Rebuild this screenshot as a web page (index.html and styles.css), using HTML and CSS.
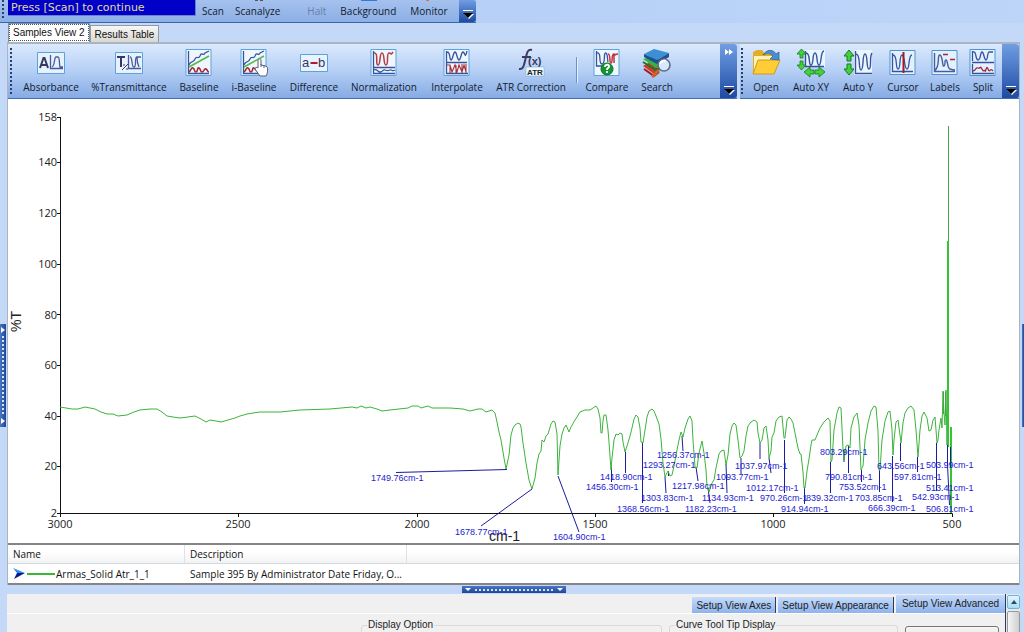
FILE: index.html
```html
<!DOCTYPE html>
<html lang="en">
<head>
<meta charset="utf-8">
<title>Spectrum - Samples View</title>
<link rel="stylesheet" href="styles.css">
</head>
<body>
<header class="command-bar">
  <div class="commands">
    <span class="grip"></span>
    <p class="status" role="status">Press [Scan] to continue</p>
    <button class="command command-scan">Scan</button>
    <button class="command"><svg class="command-icon" viewBox="0 0 20 2"><path d="M7 0h3v1h-3zM12 0h3v1h-3z" fill="#555"/></svg>Scanalyze</button>
    <button class="command command-halt" disabled>Halt</button>
    <button class="command command-background"><svg class="command-icon" viewBox="0 0 20 2"><path d="M3 0h16v1h-16z" fill="#2d7dd8"/></svg>Background</button>
    <button class="command command-monitor"><svg class="command-icon" viewBox="0 0 20 2"><path d="M7 0h3v1h-3z" fill="#d8743c"/></svg>Monitor</button>
    <button class="overflow" aria-label="More commands"><svg class="overflow-arrow" viewBox="0 0 14 11"><path d="M2 1.500h10" stroke="#fff"/><path d="M3 5h10l-5 5z" fill="#fff"/><path d="M2 4h10l-5 5z" fill="#000"/></svg></button>
  </div>
</header>

<div class="workspace">
  <aside class="rail">
    <button class="splitter-v" aria-label="Expand left pane"><span class="arrow-right"></span><span class="dots-v"></span><span class="arrow-right"></span></button>
  </aside>

  <main class="content">
    <nav class="view-tabs">
      <button class="view-tab view-tab-active">Samples View 2</button>
      <button class="view-tab">Results Table</button>
    </nav>

    <section class="view">
      <div class="toolbars">
        <div class="toolbar toolbar-math">
          <span class="grip"></span>
          <button class="tool w-78"><svg class="icon" viewBox="0 0 28 28"><path d="M.5 3.500h27v21h-27z" fill="#e8f2fd" stroke="#5ba3dd"/><path d="M3 19l3.500-10h1l3.500 10M4.500 16h5" fill="none" stroke="#373765" stroke-width="2"/><path d="M13.500 6v13.500H26M15 18c3-1 2-10 4-10h2c2 0 1 8 2 10h3" fill="none" stroke="#465a9b" stroke-width="1.300"/></svg>Absorbance</button>
          <button class="tool w-78"><svg class="icon" viewBox="0 0 28 28"><path d="M.5 3.500h27v21h-27z" fill="#e8f2fd" stroke="#5ba3dd"/><path d="M2 8h8M6 8v10" stroke="#373765" stroke-width="2"/><path d="M7 21l6-6M8 16h2M11 20h2" stroke="#373765"/><path d="M13.500 6v13.500H26M15 8c3 0 1 10 4 10s0-10 3-10h4M22 8c0 4 1 8 2 10" fill="none" stroke="#465a9b" stroke-width="1.300"/></svg>%Transmittance</button>
          <button class="tool w-62"><svg class="icon" viewBox="0 0 28 28"><path d="M1 .5h25v26H1z" fill="#eff6fe" stroke="#5ba3dd"/><path d="M3.500 2v22.500H24M4 16c3-6 4-1 6-6 2-4 3 1 5-3 2-5 3 1 5-3l4-2" fill="none" stroke="#36549e" stroke-width="1.300"/><path d="M4 18L24 7" stroke="#4dbb44" stroke-width="1.500"/><path d="M4 23c2-1 2-5 4-4s1 4 3 4 1-5 3-4 1 4 3 4 2-4 4-3 1 3 3 3" fill="none" stroke="#a5252c" stroke-width="1.500"/></svg>Baseline</button>
          <button class="tool w-48"><svg class="icon" viewBox="0 0 28 28"><path d="M1 .5h25v26H1z" fill="#eff6fe" stroke="#5ba3dd"/><path d="M3.500 2v22.500H24M4 16c3-6 4-1 6-6 2-4 3 1 5-3 2-5 3 1 5-3l4-2" fill="none" stroke="#36549e" stroke-width="1.300"/><path d="M4 18L24 7" stroke="#4dbb44" stroke-width="1.500"/><path d="M4 23c2-1 2-5 4-4s1 4 3 4 1-5 3-4l3 3" fill="none" stroke="#a5252c" stroke-width="1.500"/><path d="M18 18v-7c1-2 3-1 3 0v5l5 1c2 1 2 4 1 8l-1 2h-6l-5-7c0-2 2-2 3-1z" fill="#fff" stroke="#5a6078"/><path d="M21 15v3M24 16v3" stroke="#5a6078"/></svg>i-Baseline</button>
          <button class="tool w-72"><svg class="icon" viewBox="0 0 28 28"><path d="M.5 5.500h27v17h-27z" fill="#eaf3fd" stroke="#5ba3dd"/><text x="2" y="18" class="icon-letter">a</text><text x="18" y="18" class="icon-letter">b</text><path d="M10.500 14h7" stroke="#a32329" stroke-width="2"/></svg>Difference</button>
          <button class="tool w-68"><svg class="icon" viewBox="0 0 28 28"><path d="M1 .5h25v26H1z" fill="#eff6fe" stroke="#5ba3dd"/><path d="M3.500 2v22.500H25M3 18.500h22M4 21c3-2 3 2 6 2s3-3 5-2 3 1 5 0 2 2 5 0" fill="none" stroke="#36549e" stroke-width="1.300"/><path d="M4 4c5-1 1 12 4 12s1-12 4-12 1 12 4 12 0-12 3-12 1 3 4-1" fill="none" stroke="#b43b41" stroke-width="1.500"/></svg>Normalization</button>
          <button class="tool w-78"><svg class="icon" viewBox="0 0 28 28"><path d="M1 .5h25v26H1z" fill="#eff6fe" stroke="#5ba3dd"/><path d="M3.500 2v22.500H25M4 3c4 0 2 8 4 8s2-8 4-8 2 8 4 8 2-8 4-8 2 8 4-1M4 13.500h20" fill="none" stroke="#36549e" stroke-width="1.300"/><path d="M4 16h3l2 7 3-7 2 7 2-7 3 7 2-7 2 7M7 16v8M13 16v8M19 15v9M23 15v9" fill="none" stroke="#a7333b" stroke-width="1.100"/></svg>Interpolate</button>
          <button class="tool w-70"><svg class="icon" viewBox="0 0 28 28"><path d="M2 20c5 1 5-5 7-12 1-5 2-8 6-7M5 8h9" fill="none" stroke="#3b3a64" stroke-width="2"/><text x="11" y="16" class="icon-fx">(x)</text><path d="M9 18h18v9H9z" fill="#eef8ff" stroke="#69a8cd" stroke-width=".500"/><text x="10" y="26" class="icon-atr">ATR</text></svg>ATR Correction</button>
          <span class="separator"></span>
          <button class="tool w-50"><svg class="icon" viewBox="0 0 28 28"><path d="M1 .5h25v26H1z" fill="#eff6fe" stroke="#5ba3dd"/><path d="M3.500 2v15H13M4 4c5-1 1 11 5 11s1-12 4-11c2 1 1 5 2 9" fill="none" stroke="#36549e" stroke-width="1.300"/><path d="M15 5c3 0 1 9 3 9s0-9 3-9v9M21 7c1-2 2-2 4-2" fill="none" stroke="#c23540" stroke-width="1.500"/><circle cx="14" cy="20" r="6" fill="#149332" stroke="#087420"/><path d="M12 18c0-3 5-3 4 0l-2 2v1m0 1v2" fill="none" stroke="#fff" stroke-width="1.800"/></svg>Compare</button>
          <button class="tool w-50"><svg class="icon" viewBox="0 0 28 28"><path d="M0 17l11 8 6-5-10-7z" fill="#d93827"/><path d="M1 20l10 7 5-4" fill="none" stroke="#a51b18" stroke-width="2"/><path d="M0 10l13 9 8-5-11-7z" fill="#32b447"/><path d="M0 13l13 8 8-4" fill="none" stroke="#157a2b" stroke-width="2"/><path d="M1 5L11 0l15 4-12 7z" fill="#3c8fd6"/><path d="M1 5l13 6v4L1 8zM14 11l12-7v4l-12 7z" fill="#1d5190"/><path d="M16 21l-7 7" stroke="#c9652b" stroke-width="3"/><circle cx="21" cy="16" r="6" fill="#d6e8ff" stroke="#626b80" stroke-width="1.600"/><path d="M17 15c1-3 4-4 6-3" fill="none" stroke="#fff" stroke-width="2"/></svg>Search</button>
          <button class="overflow" aria-label="More math tools"><svg class="overflow-chevrons" viewBox="0 0 8 6"><path d="M0 0l4 3-4 3zM4 0l4 3-4 3z" fill="#fff"/></svg><svg class="overflow-arrow" viewBox="0 0 14 11"><path d="M2 1.500h10" stroke="#fff"/><path d="M3 5h10l-5 5z" fill="#fff"/><path d="M2 4h10l-5 5z" fill="#000"/></svg></button>
        </div>
        <div class="toolbar toolbar-view">
          <span class="grip"></span>
          <button class="tool w-46"><svg class="icon" viewBox="0 0 28 28"><path d="M1 24V3l4-2h5l3 4h8v19z" fill="#e2ad27"/><path d="M2 7h19v14H2z" fill="#fff4b5"/><path d="M1 25l5-14h22l-6 14z" fill="#ffce37" stroke="#cf961c"/><path d="M11 6c4-6 10-6 13-1l3-2v8l-9-1 3-3c-3-3-6-3-10-1z" fill="#4c8fd0" stroke="#2b599e" stroke-width=".700"/></svg>Open</button>
          <button class="tool w-44"><svg class="icon" viewBox="0 0 28 28"><path d="M8 1h20v17H8z" fill="#e9f5ff"/><path d="M8.500 2v15.500H27M9 4c5 0 2 12 5 12s1-12 4-12 1 12 4 12 1-14 5-14" fill="none" stroke="#36549e" stroke-width="1.400"/><path d="M4.500 0L9 5H6v4H3V5H0zM4.500 21L0 16h3v-4h3v4h3zM7 23l6-5v3h4v4h-4v3zM28 23l-6-5v3h-4v4h4v3z" fill="#44d13c" stroke="#147b20" stroke-width=".800"/></svg>Auto XY</button>
          <button class="tool w-50"><svg class="icon" viewBox="0 0 28 28"><path d="M10 1h18v25H10z" fill="#e9f5ff"/><path d="M11.500 2v22.500H28M12 5c5 0 2 16 5 16s1-16 4-16 1 15 4 15 0-12 3-16" fill="none" stroke="#36549e" stroke-width="1.400"/><path d="M5 1l5 6H7v5H3V7H0zM5 26l-5-6h3v-5h4v5h3z" fill="#44d13c" stroke="#147b20"/></svg>Auto Y</button>
          <button class="tool w-40"><svg class="icon" viewBox="0 0 28 28"><path d="M1 1.500h25v24H1z" fill="#e3f1ff" stroke="#5293cf"/><path d="M3.500 4v18.500H24M4 6c5 0 2 14 5 14s1-14 4-14 2 14 5 14 1-14 5-14" fill="none" stroke="#36549e" stroke-width="1.300"/><path d="M14.500 3v21" stroke="#a81820" stroke-width="2"/></svg>Cursor</button>
          <button class="tool w-44"><svg class="icon" viewBox="0 0 28 28"><path d="M1 1.500h25v24H1z" fill="#e3f1ff" stroke="#5293cf"/><path d="M3.500 4v18.500H24M4 21c5-2 2-16 5-15s2 12 4 11 0-6 2-6 1 8 4 9 3 1 5 1" fill="none" stroke="#465f9c" stroke-width="1.400"/><path d="M12 5.500h5M19 10.500h5" stroke="#a32836" stroke-width="1.300"/></svg>Labels</button>
          <button class="tool w-32"><svg class="icon" viewBox="0 0 28 28"><path d="M1 .5h25v26H1z" fill="#e3f1ff" stroke="#5293cf"/><path d="M3.500 2v10M3 13.500h22M3.500 15v9.500H25M4 3c4-1 2 8 5 8s2-8 4-8 2 8 4 8 1-7 3-8h4" fill="none" stroke="#36549e" stroke-width="1.300"/><path d="M4 22c4-1 2-4 5-3s2-3 4 1 2 0 3 2 1-7 3-2 2-2 5 2" fill="none" stroke="#a32836" stroke-width="1.300"/></svg>Split</button>
          <button class="overflow" aria-label="More view tools"><svg class="overflow-arrow" viewBox="0 0 14 11"><path d="M2 1.500h10" stroke="#fff"/><path d="M3 5h10l-5 5z" fill="#fff"/><path d="M2 4h10l-5 5z" fill="#000"/></svg></button>
        </div>
      </div>

      <svg class="chart" viewBox="8 99 1011 444" role="img" aria-label="Transmittance spectrum">
        <path class="axis" d="M60.500 117V517M57 117.500h4M57 162.500h4M57 213.500h4M57 264.500h4M57 314.500h4M57 365.500h4M57 416.500h4M57 466.500h4M57 513.500H952.500V517M238.500 514v3M417.500 514v3M595.500 514v3M773.500 514v3"/>
        <g class="tick-label tick-label-y">
          <text x="57" y="121">158</text><text x="57" y="166">140</text><text x="57" y="217">120</text><text x="57" y="268">100</text><text x="57" y="319">80</text><text x="57" y="369">60</text><text x="57" y="420">40</text><text x="57" y="470">20</text><text x="57" y="517">2</text>
        </g>
        <g class="tick-label tick-label-x">
          <text x="60" y="528">3000</text><text x="238" y="528">2500</text><text x="417" y="528">2000</text><text x="595" y="528">1500</text><text x="773" y="528">1000</text><text x="952" y="528">500</text>
        </g>
        <text class="axis-title" x="489" y="541">cm-1</text>
        <text class="axis-title" transform="translate(21 332) rotate(-90)">%T</text>
        <path class="leader" d="M396 472.500L507 469.500M481 526L532 489M558 476L579 532M611.500 467v15M625.500 452v21M642.500 442v61M665 477l1 16M668.500 471v5M682 436l1 15M696 467l2 14M708 488l2 15M726 464l1 29M741 458v16M760 443v16M769 458l2 15M784.500 440v53M804.500 487v17M830.500 462v31M844 450v12M848.500 445v28M861.500 470v12M879.500 470v22M892.500 456v46M900.500 443v18M917.500 457v15M936.500 443v48"/>
        <path class="curve" d="M60 407L66 408 72 409 78 409 85 407 90 408 95 409 101 412 107 414 113 414 118 416 127 415 134 412 140 410 150 409 157 409 162 412 167 416 173 417 180 418 188 417 195 416 201 419 206 422 210 420 216 421 221 422 228 420 235 418 240 416 247 414 253 413 260 412 280 412 300 410 330 409 352 407 357 408 361 406 366 408 370 407 377 409 382 411 390 410 399 409 408 408 412 406 418 406 421 408 428 406 432 408 437 408 450 408 463 409 470 411 478 409 482 409 486 412 492 410 495 413 497 422 499 432 501 440 504 458 506 469 509 455 511 435 513 428 515 425 518 423 520 424 521 427 523 443 526 463 529 480 532 489 535 478 537 463 539 454 541 451 542 440 544 442 546 436 548 434 551 424 553 421 555 422 557 434 558 475 560 446 562 434 564 428 566 425 569 432 571 427 575 420 577 417 580 412 585 410 590 410 593 408 596 406 598 409 600 418 601 433 602 433 603 421 604 415 606 415 608 430 609 442 611 470 612 458 614 440 616 434 618 435 620 433 622 434 623 442 625 452 627 446 630 436 632 428 634 419 636 415 638 417 640 428 641 442 643 443 645 430 647 417 649 411 652 409 654 411 656 416 659 424 661 439 663 463 665 477 668 471 670 476 672 475 674 466 677 450 679 440 681 432 683 437 685 428 688 419 690 416 692 421 693 440 695 467 697 468 699 453 701 445 702 441 704 453 706 470 707 486 709 492 712 483 714 480 716 468 719 454 721 451 724 450 726 465 728 455 730 434 732 426 734 423 736 425 738 440 740 458 742 456 744 451 746 436 748 426 751 422 754 420 757 422 758 433 760 443 762 440 764 428 766 426 768 440 769 458 771 451 772 437 774 433 776 421 779 417 782 416 784 438 785 438 787 420 789 417 791 419 793 423 795 433 798 448 800 454 801 454 803 472 804 488 805 488 807 471 809 459 811 445 812 440 815 440 817 435 820 428 824 422 828 418 830 421 831 462 832 460 834 430 837 413 839 407 841 408 843 449 844 460 846 446 848 445 850 448 851 428 854 417 857 413 859 425 861 470 863 466 865 440 868 423 871 411 874 406 876 407 878 431 879 470 880 470 882 440 885 421 888 412 890 411 892 430 893 455 894 440 896 422 898 420 900 435 901 443 903 423 905 413 908 408 911 406 914 410 916 430 918 457 920 430 922 416 924 412 927 418 929 431 931 430 933 420 935 417 937 443 938 440 939 430 941 418 942 428 943 391 944 413 945 425 946 390 947 445 948 400"/>
        <path class="curve curve-spike" d="M948.500 126V241M943.500 392V414M945.500 392V416"/>
        <path class="curve curve-band" d="M948 241V447M951 427V513"/>
        <path class="leader" d="M947.500 445v20l2 40M950.500 447v20"/>
        <g class="peak-label">
          <text x="371" y="481">1749.76cm-1</text><text x="455" y="535">1678.77cm-1</text><text x="553" y="540">1604.90cm-1</text>
          <text x="600" y="480">1418.90cm-1</text><text x="586" y="490">1456.30cm-1</text><text x="657" y="458">1256.37cm-1</text>
          <text x="643" y="468">1293.27cm-1</text><text x="672" y="489">1217.98cm-1</text><text x="641" y="501">1303.83cm-1</text>
          <text x="702" y="501">1134.93cm-1</text><text x="617" y="512">1368.56cm-1</text><text x="685" y="512">1182.23cm-1</text>
          <text x="716" y="480">1093.77cm-1</text><text x="735" y="469">1037.97cm-1</text><text x="746" y="491">1012.17cm-1</text>
          <text x="760" y="501">970.26cm-1</text><text x="820" y="455">803.29cm-1</text><text x="825" y="480">790.81cm-1</text>
          <text x="839" y="490">753.52cm-1</text><text x="806" y="501">839.32cm-1</text><text x="855" y="501">703.85cm-1</text>
          <text x="781" y="512">914.94cm-1</text><text x="868" y="511">666.39cm-1</text><text x="877" y="469">643.56cm-1</text>
          <text x="894" y="480">597.81cm-1</text><text x="926" y="468">503.99cm-1</text><text x="926" y="491">513.41cm-1</text>
          <text x="912" y="500">542.93cm-1</text><text x="926" y="512">506.81cm-1</text>
        </g>
      </svg>

      <table class="samples">
        <colgroup><col class="col-name"><col class="col-description"><col></colgroup>
        <thead><tr><th scope="col">Name</th><th scope="col">Description</th><th></th></tr></thead>
        <tbody><tr>
          <td><div class="sample"><svg class="sample-mark" viewBox="0 0 43 14"><path d="M0 1l12 5H4z" fill="#2e8cf0"/><path d="M4 6h8L1 12z" fill="#081a8c"/><path d="M14 7h28" stroke="#37b837" stroke-width="2"/></svg>Armas_Solid Atr_1_1</div></td>
          <td>Sample 395 By Administrator Date Friday, O...</td>
          <td></td>
        </tr></tbody>
      </table>
    </section>

    <div class="pane-divider">
      <button class="splitter-h" aria-label="Collapse setup pane"><span class="arrow-down"></span><span class="dots-h"></span><span class="arrow-down"></span></button>
    </div>

    <section class="setup">
      <div class="setup-body">
        <nav class="setup-tabs">
          <button class="setup-tab">Setup View Axes</button>
          <button class="setup-tab">Setup View Appearance</button>
          <button class="setup-tab setup-tab-active">Setup View Advanced</button>
        </nav>
        <div class="setup-page">
          <fieldset class="group group-display"><legend>Display Option</legend></fieldset>
          <fieldset class="group group-tooltip"><legend>Curve Tool Tip Display</legend></fieldset>
          <button class="default-button">Default</button>
        </div>
      </div>
      <div class="scrollbar">
        <button class="scroll-up" aria-label="Scroll up"></button>
        <div class="scroll-thumb"></div>
      </div>
    </section>
  </main>

  <aside class="rail rail-right">
    <button class="splitter-v" aria-label="Expand right pane"></button>
  </aside>
</div>
</body>
</html>
```
FILE: styles.css
```css
* { box-sizing: border-box; }

body {
  margin: 0;
  height: 100vh;
  display: flex;
  flex-direction: column;
  overflow: hidden;
  background: #c3d9f7;
  color: #141b2c;
  font-family: "Open Sans", "Noto Sans", sans-serif;
  font-size: 10px;
}

button {
  margin: 0;
  padding: 0;
  border: 0;
  background: none;
  color: inherit;
  font: inherit;
  white-space: nowrap;
}

p { margin: 0; }
svg { display: block; }

/* Command bar */
.command-bar {
  flex: none;
  height: 23px;
  background: linear-gradient(90deg, #b0cbf6, #bdd5f8);
}
.commands {
  display: flex;
  width: 476px;
  height: 23px;
  padding-left: 2px;
  border-bottom: 1px solid #3b66ad;
  background: linear-gradient(#a5c1ee, #8cafe6);
}
.grip {
  flex: none;
  width: 2px;
  margin: 4px 0;
  background: repeating-linear-gradient(#26406f 0 2px, transparent 2px 4px);
}
.commands .grip { margin-top: 0; }
.status {
  width: 188px;
  height: 16px;
  margin: 0 0 0 4px;
  padding-left: 3px;
  border: solid #6d7fce;
  border-width: 0 1px 1px 0;
  background: #0000c8;
  color: #e2dc9c;
  font: 11px/15px "DejaVu Sans", sans-serif;
}
.command {
  display: flex;
  flex-direction: column;
  align-items: center;
  justify-content: flex-end;
  height: 18px;
  margin-left: 11px;
  line-height: 14px;
}
.command-scan { margin-left: 6px; }
.command-icon { width: 20px; height: 2px; margin-bottom: auto; }
.command:disabled { color: #6780aa; }
.command-halt { margin-left: 27px; }
.command-background { margin-left: 14px; }
.command-monitor { margin-left: 14px; }
.overflow {
  flex: none;
  display: flex;
  flex-direction: column;
  align-items: center;
  width: 17px;
  padding: 5px 0 2px;
  margin-left: auto;
  border-radius: 0 3px 3px 0;
  background: linear-gradient(#6f9ee2, #1e4ba3);
}
.overflow-arrow { width: 14px; height: 11px; margin-top: auto; }
.overflow-chevrons { width: 8px; height: 6px; }

/* Workspace frame */
.workspace {
  flex: 1;
  min-height: 0;
  display: grid;
  grid-template-columns: 7px 1fr 4px;
}
.rail { padding-top: 301px; }
.rail-right { padding-left: 2px; }
.splitter-v {
  display: flex;
  flex-direction: column;
  align-items: center;
  justify-content: space-between;
  width: 6px;
  height: 103px;
  padding: 3px 0;
  background: linear-gradient(90deg, #4a78c4, #1d4598);
}
.rail-right .splitter-v { width: 2px; }
.arrow-right {
  border: solid transparent;
  border-width: 3px 0 3px 4px;
  border-left-color: #fff;
}
.dots-v {
  width: 2px;
  height: 80px;
  background: repeating-linear-gradient(#d5e4fb 0 2px, transparent 2px 4px);
}
.content {
  min-width: 0;
  min-height: 0;
  display: flex;
  flex-direction: column;
}

/* View tabs */
.view-tabs {
  flex: none;
  display: flex;
  align-items: flex-end;
  height: 19px;
  padding-left: 1px;
  font-family: "Liberation Sans", Arial, sans-serif;
  color: #111;
}
.view-tab {
  height: 17px;
  padding: 0 4px;
  border: 1px solid #8f9aa9;
  border-bottom: 0;
  background: linear-gradient(#f7f7f6, #dad8d2);
}
.view-tab-active {
  height: 19px;
  padding-bottom: 2px;
  border-color: #8090a8;
  background: #fff;
  outline: 1px dotted #555;
  outline-offset: -2px;
}

/* View with toolbars, chart and samples */
.view {
  flex: none;
  border: solid #aab4c2;
  border-width: 2px 1px 0;
}
.toolbars {
  display: flex;
  height: 55px;
  background: #c3d9f7;
}
.toolbar {
  display: flex;
  border-bottom: 1px solid #3f6db8;
  border-radius: 0 3px 0 0;
  background: linear-gradient(#dbe9fd, #b5cff5 50%, #85abe4);
}
.toolbar-math { flex: 1; padding-left: 2px; }
.toolbar-view { width: 279px; margin-left: 3px; padding-left: 1px; }
.tool {
  flex: none;
  display: flex;
  flex-direction: column;
  align-items: center;
  padding-top: 5px;
  line-height: 14px;
}
.icon { width: 28px; height: 28px; margin-bottom: 3px; overflow: visible; }
.icon-letter { font: 13px "Liberation Sans", sans-serif; fill: #373765; }
.icon-fx { font: bold 11px "Liberation Sans", sans-serif; fill: #3b3a64; }
.icon-atr { font: bold 8px "Liberation Sans", sans-serif; fill: #222; }
.w-32 { width: 32px; }
.w-40 { width: 40px; }
.w-44 { width: 44px; }
.w-46 { width: 46px; }
.w-48 { width: 48px; }
.w-50 { width: 50px; }
.w-62 { width: 62px; }
.w-68 { width: 68px; }
.w-70 { width: 70px; }
.w-72 { width: 72px; }
.w-78 { width: 78px; }
.separator {
  width: 2px;
  height: 26px;
  margin: 13px 4px 0 10px;
  border-left: 1px solid #6a91cd;
  border-right: 1px solid #e4effd;
}

/* Chart */
.chart { width: 100%; height: auto; background: #fff; }
.axis { fill: none; stroke: #111; }
.curve { fill: none; stroke: #3db33d; stroke-width: 1; stroke-linejoin: round; }
.curve-spike { stroke: #43a743; }
.curve-band { stroke: #35c435; stroke-width: 2; }
.leader { fill: none; stroke: #1c1c9c; stroke-width: 1; }
.tick-label { font: 11px "Open Sans", sans-serif; fill: #222; }
.tick-label-y { text-anchor: end; }
.tick-label-x { text-anchor: middle; }
.axis-title { font: 14px "Liberation Sans", sans-serif; fill: #222; }
.peak-label { font: 9px "Liberation Sans", sans-serif; fill: #2222d0; }

/* Samples table */
.samples {
  width: 100%;
  table-layout: fixed;
  border-collapse: separate;
  border-spacing: 0;
  border: solid #858585;
  border-width: 2px 0;
  background: #fff;
  color: #111;
  line-height: 14px;
}
.col-name { width: 177px; }
.col-description { width: 222px; }
.samples th {
  height: 19px;
  padding: 0 5px;
  border-right: 1px solid #dfe1e5;
  border-bottom: 1px solid #d5d8dd;
  background: linear-gradient(#fff 40%, #f1f2f4);
  font-weight: normal;
  text-align: left;
}
.samples td { height: 19px; padding: 0 5px; white-space: nowrap; }
.samples th:last-child { border-right: 0; }
.sample { display: flex; align-items: center; }
.sample-mark { flex: none; width: 43px; height: 14px; }

/* Divider between the view and the setup pane */
.pane-divider {
  flex: none;
  display: flex;
  justify-content: center;
  height: 9px;
  padding-top: 1px;
}
.splitter-h {
  display: flex;
  align-items: center;
  justify-content: space-between;
  width: 104px;
  height: 7px;
  padding: 0 3px;
  background: linear-gradient(#4a78c4, #1d4598);
}
.arrow-down {
  border: solid transparent;
  border-width: 3px 3px 0;
  border-top-color: #fff;
}
.dots-h {
  width: 78px;
  height: 2px;
  background: repeating-linear-gradient(90deg, #d5e4fb 0 2px, transparent 2px 4px);
}

/* Setup pane */
.setup {
  flex: 1;
  min-height: 0;
  display: flex;
  overflow: hidden;
  background: #f0f0f0;
  color: #222;
  font-family: "Liberation Sans", Arial, sans-serif;
}
.setup-body {
  flex: 1;
  min-width: 0;
  border-right: 1px solid #2a3c5c;
}
.setup-tabs {
  display: flex;
  justify-content: flex-end;
  align-items: flex-end;
  height: 20px;
  border-bottom: 1px solid #fff;
}
.setup-tab {
  height: 16px;
  margin-right: 2px;
  padding: 0 4px;
  border-right: 1px solid #2a3c5c;
  background: linear-gradient(#c6dbfa, #8db3ec);
}
.setup-tab-active {
  height: 18px;
  margin-right: 0;
  padding: 0 6px 2px;
  border-right: 0;
}
.setup-page {
  display: flex;
  align-items: flex-start;
  justify-content: flex-end;
  gap: 7px;
  height: 60px;
  padding: 4px 6px 0 0;
}
.group {
  height: 60px;
  margin: 0;
  padding: 0 5px;
  border: 1px solid #d9d9d9;
  border-radius: 3px;
}
.group legend { padding: 0 1px; line-height: 14px; }
.group-display { width: 301px; }
.group-tooltip { width: 229px; }
.default-button {
  width: 94px;
  height: 20px;
  margin-top: 8px;
  border: 1px solid #777;
  border-radius: 3px;
  background: linear-gradient(#f5f5f5, #ddd);
  font-weight: bold;
}
.scrollbar {
  width: 14px;
  padding: 1px 0;
  background: #e9e9e9;
}
.scroll-up {
  display: flex;
  align-items: center;
  justify-content: center;
  width: 13px;
  height: 14px;
  margin-left: 1px;
  border: 1px solid #6fb4dc;
  border-radius: 2px;
  background: linear-gradient(#e6f5fd, #a9dcf6);
}
.scroll-up::before {
  content: "";
  border: solid transparent;
  border-width: 0 3px 4px;
  border-bottom-color: #284b66;
}
.scroll-thumb {
  height: 40px;
  margin: 2px 0 0 1px;
  border: 1px solid #989898;
  border-radius: 2px;
  background: linear-gradient(90deg, #f5f5f5, #cfcfcf);
}
```
